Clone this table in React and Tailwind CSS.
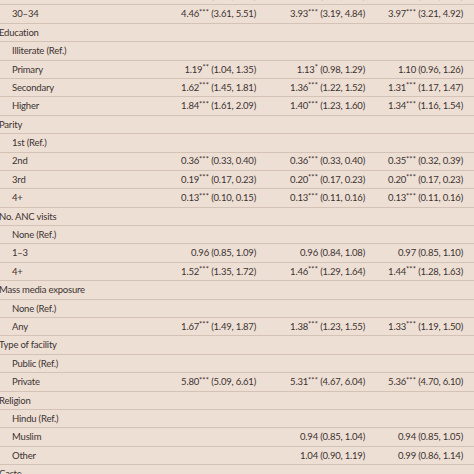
import React from "react";

const rows = [
  { label: "25–29", sub: true, v: [["2.59", "***", "(2.10, 3.19)"], ["2.41", "***", "(1.96, 2.96)"], ["2.43", "***", "(1.97, 2.99)"]] },
  { label: "30–34", sub: true, v: [["4.46", "***", "(3.61, 5.51)"], ["3.93", "***", "(3.19, 4.84)"], ["3.97", "***", "(3.21, 4.92)"]] },
  { label: "Education" },
  { label: "Illiterate (Ref.)", sub: true },
  { label: "Primary", sub: true, v: [["1.19", "**", "(1.04, 1.35)"], ["1.13", "*", "(0.98, 1.29)"], ["1.10", "", "(0.96, 1.26)"]] },
  { label: "Secondary", sub: true, v: [["1.62", "***", "(1.45, 1.81)"], ["1.36", "***", "(1.22, 1.52)"], ["1.31", "***", "(1.17, 1.47)"]] },
  { label: "Higher", sub: true, v: [["1.84", "***", "(1.61, 2.09)"], ["1.40", "***", "(1.23, 1.60)"], ["1.34", "***", "(1.16, 1.54)"]] },
  { label: "Parity" },
  { label: "1st (Ref.)", sub: true },
  { label: "2nd", sub: true, v: [["0.36", "***", "(0.33, 0.40)"], ["0.36", "***", "(0.33, 0.40)"], ["0.35", "***", "(0.32, 0.39)"]] },
  { label: "3rd", sub: true, v: [["0.19", "***", "(0.17, 0.23)"], ["0.20", "***", "(0.17, 0.23)"], ["0.20", "***", "(0.17, 0.23)"]] },
  { label: "4+", sub: true, v: [["0.13", "***", "(0.10, 0.15)"], ["0.13", "***", "(0.11, 0.16)"], ["0.13", "***", "(0.11, 0.16)"]] },
  { label: "No. ANC visits" },
  { label: "None (Ref.)", sub: true },
  { label: "1–3", sub: true, v: [["0.96", "", "(0.85, 1.09)"], ["0.96", "", "(0.84, 1.08)"], ["0.97", "", "(0.85, 1.10)"]] },
  { label: "4+", sub: true, v: [["1.52", "***", "(1.35, 1.72)"], ["1.46", "***", "(1.29, 1.64)"], ["1.44", "***", "(1.28, 1.63)"]] },
  { label: "Mass media exposure" },
  { label: "None (Ref.)", sub: true },
  { label: "Any", sub: true, v: [["1.67", "***", "(1.49, 1.87)"], ["1.38", "***", "(1.23, 1.55)"], ["1.33", "***", "(1.19, 1.50)"]] },
  { label: "Type of facility" },
  { label: "Public (Ref.)", sub: true },
  { label: "Private", sub: true, v: [["5.80", "***", "(5.09, 6.61)"], ["5.31", "***", "(4.67, 6.04)"], ["5.36", "***", "(4.70, 6.10)"]] },
  { label: "Religion" },
  { label: "Hindu (Ref.)", sub: true },
  { label: "Muslim", sub: true, v: [null, ["0.94", "", "(0.85, 1.04)"], ["0.94", "", "(0.85, 1.05)"]] },
  { label: "Other", sub: true, v: [null, ["1.04", "", "(0.90, 1.19)"], ["0.99", "", "(0.86, 1.14)"]] },
  { label: "Caste" },
];

function Val({ v }) {
  if (!v) return null;
  return (
    <span className="whitespace-nowrap">
      {v[0]}
      {v[1] ? <span className="relative -top-[2.5px] text-[7.5px] tracking-[0.1px]">{v[1]}</span> : null}
      {" "}
      {v[2]}
    </span>
  );
}

export default function App() {
  return (
    <div
      className="w-[474px] h-[474px] overflow-hidden bg-[#eedfd5] text-[#3b3331] text-[9.5px] tracking-[-0.2px] leading-none"
      style={{ fontFamily: "Lato, 'Noto Sans', sans-serif" }}
    >
      <div className="-mt-[13px] flex flex-col">
        {rows.map((r, i) => (
          <div key={i} className="flex h-[18.4px] shrink-0 items-center border-b border-[#d4c2b7]">
            <div className={r.sub ? "w-[160px] pl-[12px]" : "w-[160px] -ml-px"}>{r.label}</div>
            <div className="w-[96px] text-right">{r.v ? <Val v={r.v[0]} /> : null}</div>
            <div className="w-[109px] text-right">{r.v ? <Val v={r.v[1]} /> : null}</div>
            <div className="w-[98px] text-right">{r.v ? <Val v={r.v[2]} /> : null}</div>
          </div>
        ))}
      </div>
    </div>
  );
}
